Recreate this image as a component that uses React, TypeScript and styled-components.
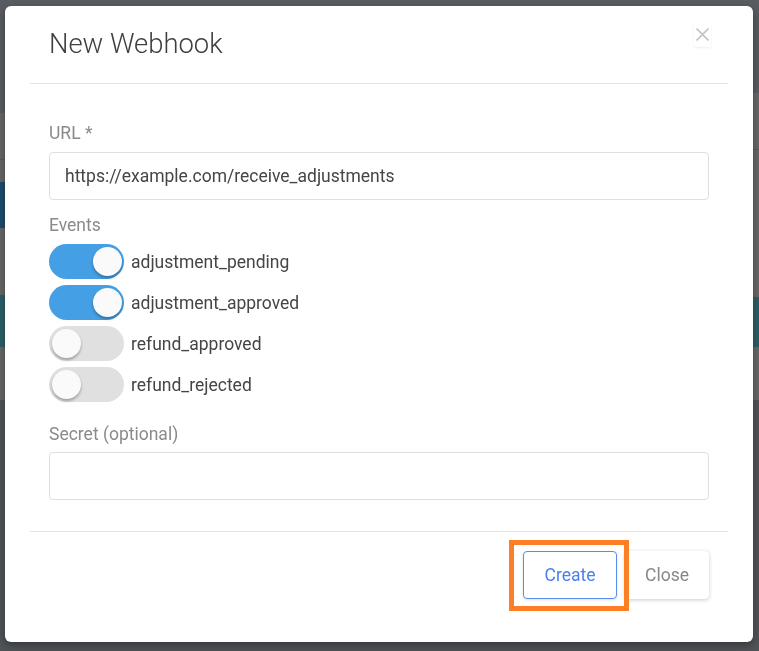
import React, { useState } from "react";
import styled, { createGlobalStyle } from "styled-components";

const GlobalStyle = createGlobalStyle`
  html, body {
    margin: 0;
    padding: 0;
    height: 100%;
  }
  body {
    font-family: Roboto, "Liberation Sans", Arial, sans-serif;
    background: #54575b;
    overflow: hidden;
  }
  * { box-sizing: border-box; }
`;

/* ---------- dimmed page behind the modal ---------- */

const Page = styled.div`
  display: flex;
  width: 100%;
  height: 651px;
`;

const PageColumn = styled.div`
  flex: 1;
  display: flex;
  flex-direction: column;
`;

const Band = styled.div<{ $h: number; $bg: string; $line?: boolean }>`
  height: ${(p) => p.$h}px;
  flex: none;
  background: ${(p) => p.$bg};
  border-bottom: ${(p) => (p.$line ? "1px solid #5a5a5a" : "none")};
`;

const BandFill = styled.div`
  flex: 1;
  background: #505357;
`;

/* ---------- modal ---------- */

const Overlay = styled.div`
  position: fixed;
  inset: 0;
  display: flex;
  align-items: flex-start;
  padding: 6px 6px 9px 5px;
`;

const Modal = styled.div`
  width: 748px;
  height: 636px;
  background: #ffffff;
  border-radius: 6px;
  box-shadow: 0 3px 9px rgba(0, 0, 0, 0.35);
  display: flex;
  flex-direction: column;
`;

const Header = styled.div`
  height: 78px;
  margin: 0 25px;
  padding: 22px 19px 0 19px;
  border-bottom: 1px solid #e4e4e4;
  display: flex;
  justify-content: space-between;
  align-items: flex-start;
`;

const Title = styled.h4`
  margin: 0;
  font-size: 27.4px;
  line-height: 33px;
  font-weight: 300;
  color: #3f3f3f;
`;

const CloseX = styled.button`
  width: 17px;
  height: 22px;
  margin: -3px -2px 0 0;
  padding: 0;
  border: none;
  background: #fff;
  box-shadow: 0 1px 2px rgba(0, 0, 0, 0.07);
  display: flex;
  align-items: flex-start;
  justify-content: center;
  padding-top: 3px;
  cursor: pointer;
`;

const Body = styled.div`
  margin: 0 25px;
  padding: 39px 19px 31px 19px;
  display: flex;
  flex-direction: column;
`;

const Label = styled.label<{ $mt?: number; $mb: number }>`
  display: block;
  font-size: 17.5px;
  line-height: 21px;
  color: #8a8a8a;
  margin-top: ${(p) => p.$mt ?? 0}px;
  margin-bottom: ${(p) => p.$mb}px;
`;

const TextInput = styled.input`
  display: block;
  width: 100%;
  height: 48px;
  padding: 0 15px;
  border: 1px solid #dfdfdf;
  border-radius: 4px;
  font-family: inherit;
  font-size: 17.5px;
  color: #454545;
  background: #fff;
  outline: none;
`;

const ToggleList = styled.div`
  display: flex;
  flex-direction: column;
  gap: 6px;
`;

const ToggleRow = styled.label`
  display: flex;
  align-items: center;
  gap: 7px;
  height: 35px;
  cursor: pointer;
`;

const Track = styled.span<{ $on: boolean }>`
  position: relative;
  width: 75px;
  height: 35px;
  border-radius: 18px;
  flex: none;
  background: ${(p) => (p.$on ? "#449fe5" : "#e0e0e0")};
  transition: background 0.2s;
`;

const Knob = styled.span<{ $on: boolean }>`
  position: absolute;
  top: 3px;
  left: ${(p) => (p.$on ? "44px" : "3px")};
  width: 29px;
  height: 29px;
  border-radius: 50%;
  background: #fafafa;
  box-shadow: 0 2px 3px rgba(0, 0, 0, 0.3);
  transition: left 0.2s;
`;

const ToggleText = styled.span`
  font-size: 17.5px;
  color: #454545;
`;

const Footer = styled.div`
  margin: 0 25px;
  padding: 19px 19px 0 19px;
  border-top: 1px solid #e4e4e4;
  display: flex;
  justify-content: flex-end;
  gap: 8px;
`;

const Highlight = styled.div`
  position: relative;
  z-index: 2;
  &::after {
    content: "";
    position: absolute;
    top: -11px;
    bottom: -12px;
    left: -14px;
    right: -12px;
    border: 5px solid #fd7f25;
    pointer-events: none;
  }
`;

const Button = styled.button<{ $primary?: boolean }>`
  height: 48px;
  width: ${(p) => (p.$primary ? "94px" : "84px")};
  border-radius: 4px;
  font-family: inherit;
  font-size: 17.5px;
  background: #fff;
  cursor: pointer;
  color: ${(p) => (p.$primary ? "#4a80ee" : "#888888")};
  border: 1px solid ${(p) => (p.$primary ? "#5a8cf0" : "#fff")};
  box-shadow: ${(p) =>
    p.$primary ? "0 1px 3px rgba(0,0,0,0.12)" : "0 1px 4px rgba(0,0,0,0.2)"};
`;

const events = [
  { name: "adjustment_pending", on: true },
  { name: "adjustment_approved", on: true },
  { name: "refund_approved", on: false },
  { name: "refund_rejected", on: false },
];

export default function App() {
  const [state, setState] = useState(events.map((e) => e.on));
  const [url, setUrl] = useState("https://example.com/receive_adjustments");
  const [secret, setSecret] = useState("");

  return (
    <>
      <GlobalStyle />
      <Page>
        <PageColumn>
          <Band $h={113} $bg="#595c60" />
          <Band $h={47} $bg="#676767" $line />
          <Band $h={22} $bg="#676767" />
          <Band $h={46} $bg="#1e4b6d" />
          <Band $h={67} $bg="#676767" />
          <Band $h={52} $bg="#2b5f67" />
          <Band $h={53} $bg="#676767" />
          <BandFill />
        </PageColumn>
        <PageColumn>
          <Band $h={93} $bg="#595c60" />
          <Band $h={57} $bg="#676767" $line />
          <Band $h={147} $bg="#676767" />
          <Band $h={50} $bg="#2b5f67" />
          <Band $h={53} $bg="#676767" />
          <BandFill />
        </PageColumn>
      </Page>

      <Overlay>
        <Modal>
          <Header>
            <Title>New Webhook</Title>
            <CloseX aria-label="Close">
              <svg width="13" height="13" viewBox="0 0 13 13">
                <path
                  d="M0.5 0.5 L12.5 12.5 M12.5 0.5 L0.5 12.5"
                  stroke="#c4c4c4"
                  strokeWidth="1.6"
                  fill="none"
                />
              </svg>
            </CloseX>
          </Header>

          <Body>
            <Label $mb={8}>URL *</Label>
            <TextInput value={url} onChange={(e) => setUrl(e.target.value)} />

            <Label $mt={15} $mb={8}>
              Events
            </Label>
            <ToggleList>
              {events.map((ev, i) => (
                <ToggleRow
                  key={ev.name}
                  onClick={() =>
                    setState((s) => s.map((v, j) => (j === i ? !v : v)))
                  }
                >
                  <Track $on={state[i]}>
                    <Knob $on={state[i]} />
                  </Track>
                  <ToggleText>{ev.name}</ToggleText>
                </ToggleRow>
              ))}
            </ToggleList>

            <Label $mt={22} $mb={7}>
              Secret (optional)
            </Label>
            <TextInput
              value={secret}
              onChange={(e) => setSecret(e.target.value)}
            />
          </Body>

          <Footer>
            <Highlight>
              <Button $primary>Create</Button>
            </Highlight>
            <Button>Close</Button>
          </Footer>
        </Modal>
      </Overlay>
    </>
  );
}
